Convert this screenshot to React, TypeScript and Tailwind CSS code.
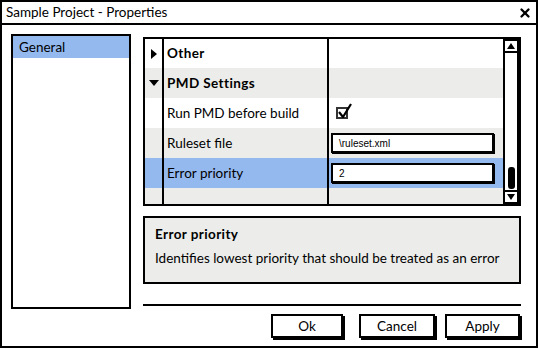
import { X } from "lucide-react";

const font = { fontFamily: "Lato, 'Open Sans', sans-serif" };

function Triangle({ dir }: { dir: "right" | "down" }) {
  return dir === "right" ? (
    <svg width="8" height="10" viewBox="0 0 8 10">
      <path d="M1 0 L7 5 L1 10 Z" fill="#000" />
    </svg>
  ) : (
    <svg width="10" height="8" viewBox="0 0 10 8">
      <path d="M0 1 L10 1 L5 7 Z" fill="#000" />
    </svg>
  );
}

function CheckBox() {
  return (
    <div className="relative h-[12px] w-[12px] border-2 border-[#333] bg-white">
      <svg className="absolute -top-[6px] left-0" width="14" height="16" viewBox="0 0 14 16">
        <path d="M1 9 L5 14 L13 1" fill="none" stroke="#000" strokeWidth="2.2" strokeLinejoin="round" />
      </svg>
    </div>
  );
}

function Field({ value }: { value: string }) {
  return (
    <div
      className="flex h-[20px] w-[163px] items-center border-2 border-black bg-white px-[6px] text-[10px] shadow-[1px_1px_0_#000]"
      style={{ fontFamily: "'Liberation Sans', Arial, sans-serif" }}
    >
      {value}
    </div>
  );
}

type Row = {
  arrow?: "right" | "down";
  label: string;
  bold?: boolean;
  bg: string;
  value?: React.ReactNode;
  h?: string;
};

const rows: Row[] = [
  { arrow: "right", label: "Other", bold: true, bg: "bg-white", h: "h-[29px]" },
  { arrow: "down", label: "PMD Settings", bold: true, bg: "bg-[#ecedeb]" },
  { label: "Run PMD before build", bg: "bg-white", value: <CheckBox /> },
  { label: "Ruleset file", bg: "bg-[#ecedeb]", value: <Field value="\ruleset.xml" /> },
  { label: "Error priority", bg: "bg-[#94b9ef]", value: <Field value="2" /> },
];

function Button({ label, className }: { label: string; className: string }) {
  return (
    <button className={`flex h-[24px] items-center justify-center border-2 border-black bg-white text-[13.5px] shadow-[2px_2px_0_#000] ${className}`}>
      {label}
    </button>
  );
}

export default function App() {
  return (
    <div className="h-[349px] w-[539px] bg-white text-black" style={font}>
      <div className="flex h-[348px] w-[538px] flex-col border-2 border-black">
        <div className="flex h-[23px] items-center justify-between border-b-2 border-black pl-[4px] pr-[4px] text-[13.5px]">
          <span>Sample Project - Properties</span>
          <X className="h-[14px] w-[14px]" strokeWidth={4} />
        </div>
        <div className="flex flex-1 pl-[9px] pt-[9px]">
          <div className="h-[275px] w-[120px] border-2 border-black bg-white">
            <div className="flex h-[22px] items-center bg-[#94b9ef] pl-[6px] text-[13.5px]">General</div>
          </div>
          <div className="ml-[12px] flex w-[378px] flex-col pt-[3px]">
            <div className="flex h-[169px] border-2 border-black">
              <div className="flex flex-1 flex-col text-[13.5px]">
                {rows.map((r) => (
                  <div key={r.label} className={`flex ${r.h ?? "h-[30px]"} ${r.bg}`}>
                    <div className="flex w-[19px] items-center justify-center border-r-2 border-black">
                      {r.arrow && <Triangle dir={r.arrow} />}
                    </div>
                    <div className={`flex w-[165px] items-center border-r-2 border-black pl-[3px] ${r.bold ? "font-bold tracking-[0.4px]" : ""}`}>
                      {r.label}
                    </div>
                    <div className="flex flex-1 items-center pl-[2px]">
                      {r.value && <div className={r.label.startsWith("Run") ? "pl-[5px]" : ""}>{r.value}</div>}
                    </div>
                  </div>
                ))}
                <div className="flex flex-1 bg-[#ecedeb]">
                  <div className="w-[19px] border-r-2 border-black" />
                  <div className="w-[165px] border-r-2 border-black" />
                  <div className="flex-1" />
                </div>
              </div>
              <div className="flex w-[16px] flex-col border-2 border-black bg-white">
                <div className="flex h-[12px] items-center justify-center border-b-2 border-black">
                  <svg width="8" height="6" viewBox="0 0 8 6"><path d="M0 6 L4 0 L8 6 Z" fill="#000" /></svg>
                </div>
                <div className="flex flex-1 flex-col items-center justify-end pb-[1px]">
                  <div className="h-[22px] w-[7px] rounded-[3px] bg-black" />
                </div>
                <div className="flex h-[12px] items-center justify-center border-t-2 border-black">
                  <svg width="8" height="6" viewBox="0 0 8 6"><path d="M0 0 L8 0 L4 6 Z" fill="#000" /></svg>
                </div>
              </div>
            </div>
            <div className="mt-[10px] flex h-[68px] flex-col border-2 border-black bg-[#ecedeb] pl-[10px] pt-[6px]">
              <div className="text-[13.5px] font-bold tracking-[0.4px]">Error priority</div>
              <div className="mt-[4px] text-[13.5px]">Identifies lowest priority that should be treated as an error</div>
            </div>
            <div className="mt-[20px] h-[2px] w-full bg-black" />
            <div className="mt-[8px] flex justify-end pr-[1px]">
              <Button label="Ok" className="w-[72px]" />
              <Button label="Cancel" className="ml-[16px] w-[76px]" />
              <Button label="Apply" className="ml-[10px] w-[75px]" />
            </div>
          </div>
        </div>
      </div>
    </div>
  );
}
